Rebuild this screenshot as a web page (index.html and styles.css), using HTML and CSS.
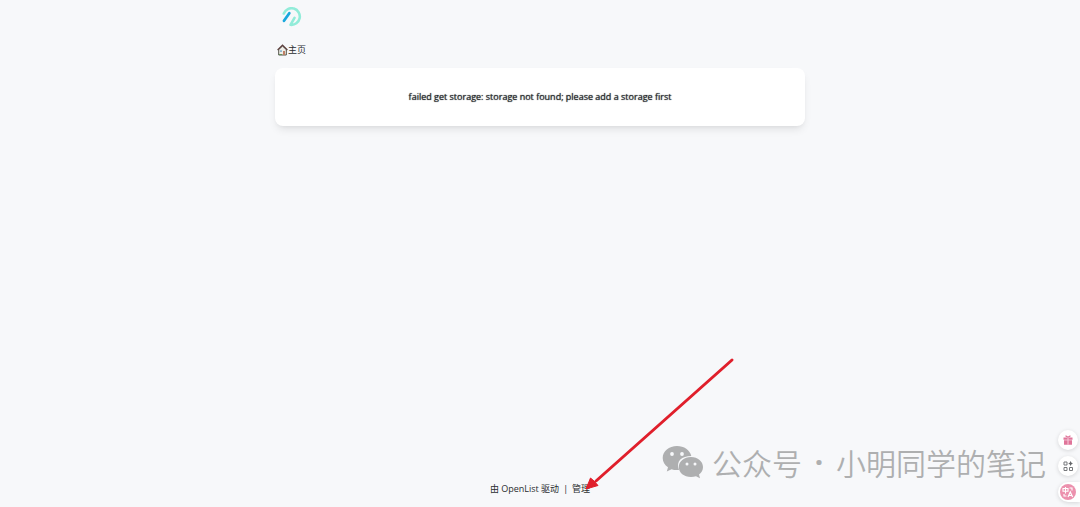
FILE: index.html
```html
<!DOCTYPE html>
<html lang="zh-CN">
<head>
<meta charset="utf-8">
<title>OpenList</title>
<link rel="stylesheet" href="styles.css">
</head>
<body>
<div class="app">
  <header class="header container">
    <a class="logo" href="#" aria-label="OpenList">
      <svg width="20" height="20" viewBox="0 0 20 20" fill="none" stroke-linecap="round">
        <path d="M1.800 6.500A8.300 8.300 0 1 1 8.500 17.800L12.500 10.800" stroke="#92ecd9" stroke-width="2.600" stroke-linejoin="round"/>
        <path d="M2 13.800L7.300 6.200" stroke="#19a8dd" stroke-width="2.800"/>
      </svg>
    </a>
  </header>
  <main class="main container">
    <nav class="breadcrumb">
      <a class="crumb" href="#">
        <svg width="11" height="12" viewBox="0 0 11 12">
          <path d="M1.7 5.5L5.5 2L9.3 5.5V11H1.7Z" fill="#f0eee8" stroke="#53544c"/>
          <path d="M.6 6L5.5 1.2L10.4 6" fill="none" stroke="#5c403d" stroke-width="1.2"/>
          <path d="M3 6.2H5V8H3Z" fill="#8fb7ce"/>
          <path d="M6 7H8V11H6Z" fill="#bd8065"/>
          <path d="M2 10.5H5" stroke="#65945a"/>
        </svg><span>主页</span>
      </a>
    </nav>
    <section class="card">
      <h2 class="message">failed get storage: storage not found; please add a storage first</h2>
    </section>
  </main>
  <footer class="footer">
    <a href="#">由 OpenList 驱动</a>
    <span>|</span>
    <a href="#">管理</a>
  </footer>
</div>

<svg class="arrow" width="150" height="136" viewBox="0 0 150 136">
  <path d="M147 5L11 126" stroke="#e01f2b" stroke-width="3" stroke-linecap="round"/>
  <path d="M1 134L5.500 123L9 126L13 130.500Z" fill="#e01f2b" stroke="#e01f2b" stroke-linejoin="round"/>
</svg>

<div class="watermark">
  <svg width="42" height="34" viewBox="0 0 42 34">
    <path d="M15 1C7 1 .7 6.300 .7 13C.7 16.800 2.700 20 6 22.300L4.800 26.500L9.600 24.200C12 25 14 25.200 17 24.900C13.500 16 20 11 29.300 11C28 5 22 1 15 1Z" fill="#aeafb0"/>
    <path d="M29 12C22 12 16.800 16.500 16.800 22C16.800 27.800 22 32 29 32C30.800 32 32.400 31.700 34 31.200L38 33.200L37 29.600C39.600 27.800 41 25 41 22C41 16.500 35.800 12 29 12Z" fill="#aeafb0"/>
    <g fill="#f7f8fa"><circle cx="10" cy="9" r="1.900"/><circle cx="20" cy="9" r="1.900"/><circle cx="25" cy="19" r="1.500"/><circle cx="33" cy="19" r="1.500"/></g>
  </svg>
  <span>公众号</span><span class="dot">·</span><span>小明同学的笔记</span>
</div>

<aside class="tools">
  <button class="tool" type="button" aria-label="礼物">
    <svg width="10" height="10" viewBox="0 0 10 10">
      <path d="M.5 2.500H9.500V4.700H.5ZM1 5.200H9V9.700H1Z" fill="#e0759a"/>
      <path d="M2.500 .8L5 2.300L7.500 .8" fill="none" stroke="#e0759a" stroke-width="1.200"/>
      <path d="M5 2.500V9.700" stroke="#f7cddb"/>
    </svg>
  </button>
  <button class="tool" type="button" aria-label="应用">
    <svg width="10" height="10" viewBox="0 0 10 10" fill="none" stroke="#77797c">
      <path d="M1 1H4V4H1ZM1 6.500H4V9.500H1ZM6.500 6.500H9.500V9.500H6.500Z"/>
      <path d="M7.600 0L8.500 1.700L10 2.500L8.500 3.300L7.600 5L6.700 3.300L5.200 2.500L6.700 1.700Z" fill="#66686b" stroke="none"/>
    </svg>
  </button>
  <button class="tool tool-docked" type="button" aria-label="翻译">
    <svg width="16" height="16" viewBox="0 0 16 16" fill="none" stroke="#fff">
      <circle cx="8" cy="8" r="8" fill="#ec91ae" stroke="none"/>
      <path d="M3 4.500H8V7.300H3ZM5.500 3V9.500M9.500 4H12V6.500M4 10V12H6.500" stroke-width="1.100"/>
      <path d="M8 13L10.300 8L12.600 13M9 11.500H11.700" stroke-width="1.200"/>
    </svg>
  </button>
</aside>
</body>
</html>
```

FILE: styles.css
```css
* { box-sizing: border-box; }

body {
  margin: 0;
  background: #f7f8fa;
  color: #2a2d30;
  font: 9px/14px "Open Sans", "Noto Sans CJK SC", sans-serif;
}

a { color: inherit; text-decoration: none; }

.app {
  min-height: 100vh;
  display: flex;
  flex-direction: column;
}

.container {
  width: 98%;
  max-width: 530px;
  margin: 0 auto;
}

.header {
  height: 34px;
  padding: 0 7px;
  display: flex;
  align-items: center;
}

.logo { display: flex; }

.main {
  flex: 1;
  display: flex;
  flex-direction: column;
  gap: 10px;
  padding-top: 8px;
}

.breadcrumb { padding: 0 2px; display: flex; height: 16px; }

.crumb { display: flex; align-items: center; }

.card {
  padding: 22px 16px;
  border-radius: 8px;
  background: #fff;
  box-shadow: 0 5px 8px -2px rgba(0, 0, 0, .1), 0 2px 4px -2px rgba(0, 0, 0, .05);
}

.message {
  margin: 0;
  font-size: 9px;
  line-height: 14px;
  font-weight: 500;
  text-align: center;
  text-shadow: 0 0 1px currentColor;
}

.footer {
  display: flex;
  justify-content: center;
  gap: 4px;
  padding-bottom: 11px;
}

.arrow {
  position: absolute;
  left: 585px;
  top: 355px;
  pointer-events: none;
}

.watermark {
  position: absolute;
  right: 34px;
  bottom: 24px;
  display: flex;
  align-items: center;
  color: #aeafb0;
  font: 350 30px/42px "Noto Sans CJK SC", sans-serif;
  white-space: nowrap;
}

.watermark svg { margin-right: 8px; }

.dot {
  width: 34px;
  font-family: "Noto Sans", sans-serif;
  font-weight: 700;
  text-align: center;
}

.tools {
  position: absolute;
  right: 0;
  bottom: 5px;
  display: flex;
  flex-direction: column;
  align-items: flex-end;
  gap: 6px;
}

.tool {
  width: 20px;
  height: 20px;
  margin-right: 2px;
  padding: 0;
  border: 0;
  border-radius: 10px;
  background: #fff;
  box-shadow: 0 1px 4px rgba(0, 0, 0, .14);
  display: flex;
  align-items: center;
  justify-content: center;
}

.tool-docked {
  width: 22px;
  margin-right: 0;
  padding-right: 2px;
  border-radius: 10px 0 0 10px;
}
```
